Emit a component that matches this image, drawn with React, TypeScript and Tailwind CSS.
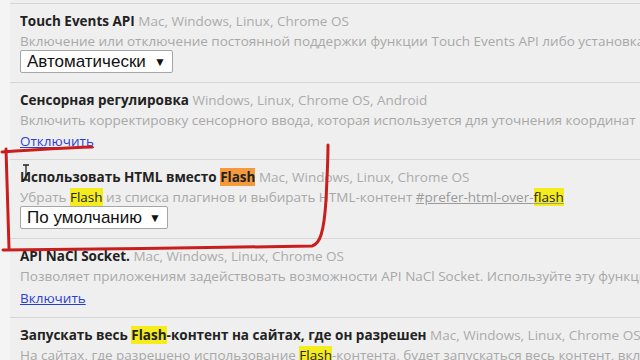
import React from "react";

const Mark = ({ children, orange = false }: { children: React.ReactNode; orange?: boolean }) => (
  <span className={orange ? "bg-[#f59a3c] text-[#222]" : "bg-[#f4ec1c] text-[#222]"}>{children}</span>
);

const Platforms = ({ text }: { text: string }) => (
  <span className="font-normal text-[#ababab]"> {text}</span>
);

const FakeSelect = ({ label, width }: { label: string; width: string }) => (
  <div
    className={`flex h-[23px] ${width} items-center justify-between rounded-[2px] border border-[#a6a6a6] bg-white pl-[6px] pr-[6px] font-['Liberation_Sans',Arial,sans-serif] text-[17px] text-[#111]`}
  >
    <span>{label}</span>
    <span className="text-[12px]">▼</span>
  </div>
);

const Experiment = ({
  title,
  desc,
  children,
}: {
  title: React.ReactNode;
  desc: React.ReactNode;
  children: React.ReactNode;
}) => (
  <div className="ml-[10px] border-t border-[#d6d6d6] pb-[8px] pl-[10px] pt-[7px]">
    <div className="h-[20px] whitespace-nowrap text-[13.5px] font-bold leading-[20px] text-[#222]">{title}</div>
    <div className="h-[20px] whitespace-nowrap text-[13.5px] leading-[20px] text-[#a8a8a8]">{desc}</div>
    {children}
  </div>
);

export default function App() {
  return (
    <div className="relative h-[360px] w-[640px] overflow-hidden bg-[#efefef] pt-[3px] font-['Open_Sans',sans-serif]">
      <div className="absolute left-0 top-0 h-full w-[10px] bg-[#f4f4f4]" />

      <Experiment
        title={
          <>
            Touch Events API<Platforms text="Mac, Windows, Linux, Chrome OS" />
          </>
        }
        desc="Включение или отключение постоянной поддержки функции Touch Events API либо установка её значения"
      >
        <div className="-mt-[1px]">
          <FakeSelect label="Автоматически" width="w-[153px]" />
        </div>
        <div className="h-[1px]" />
      </Experiment>

      <Experiment
        title={
          <>
            Сенсорная регулировка<Platforms text="Windows, Linux, Chrome OS, Android" />
          </>
        }
        desc="Включить корректировку сенсорного ввода, которая используется для уточнения координат касания"
      >
        <div className="h-[21px] text-[13.5px] leading-[22px] text-[#2b3fd6] underline">Отключить</div>
      </Experiment>

      <Experiment
        title={
          <>
            Использовать HTML вместо <Mark orange>Flash</Mark>
            <Platforms text="Mac, Windows, Linux, Chrome OS" />
          </>
        }
        desc={
          <>
            Убрать <Mark>Flash</Mark> из списка плагинов и выбирать HTML-контент{" "}
            <span className="text-[#9a9a9a] underline">
              #prefer-html-over-<Mark>flash</Mark>
            </span>
          </>
        }
      >
        <div className="-mt-[1px]">
          <FakeSelect label="По умолчанию" width="w-[148px]" />
        </div>
        <div className="h-[1px]" />
      </Experiment>

      <Experiment
        title={
          <>
            API NaCl Socket.<Platforms text="Mac, Windows, Linux, Chrome OS" />
          </>
        }
        desc="Позволяет приложениям задействовать возможности API NaCl Socket. Используйте эту функцию только для тестирования"
      >
        <div className="h-[23px] text-[13.5px] leading-[24px] text-[#2b3fd6] underline">Включить</div>
      </Experiment>

      <Experiment
        title={
          <>
            Запускать весь <Mark>Flash</Mark>-контент на сайтах, где он разрешен
            <Platforms text="Mac, Windows, Linux, Chrome OS" />
          </>
        }
        desc={
          <>
            На сайтах, где разрешено использование <Mark>Flash</Mark>-контента, будет запускаться весь контент, включая
          </>
        }
      >
        <div />
      </Experiment>

      {/* text cursor */}
      <svg className="pointer-events-none absolute left-[22px] top-[164px]" width="8" height="17" viewBox="0 0 8 17">
        <path d="M1 1h6M4 1v15M1 16h6" stroke="#222" strokeWidth="1.3" fill="none" />
      </svg>

      {/* hand-drawn annotation */}
      <svg className="pointer-events-none absolute left-0 top-0" width="640" height="360" viewBox="0 0 640 360">
        <g stroke="#c81e1e" strokeWidth="3" fill="none" strokeLinecap="round">
          <path d="M2 152 C 30 150, 60 148, 92 147" />
          <path d="M6 149 C 7 180, 8 215, 9 248" />
          <path d="M3 250 C 100 249, 220 248, 312 246 C 320 244, 324 232, 326 200 C 327 180, 328 160, 328 145" />
        </g>
      </svg>
    </div>
  );
}
